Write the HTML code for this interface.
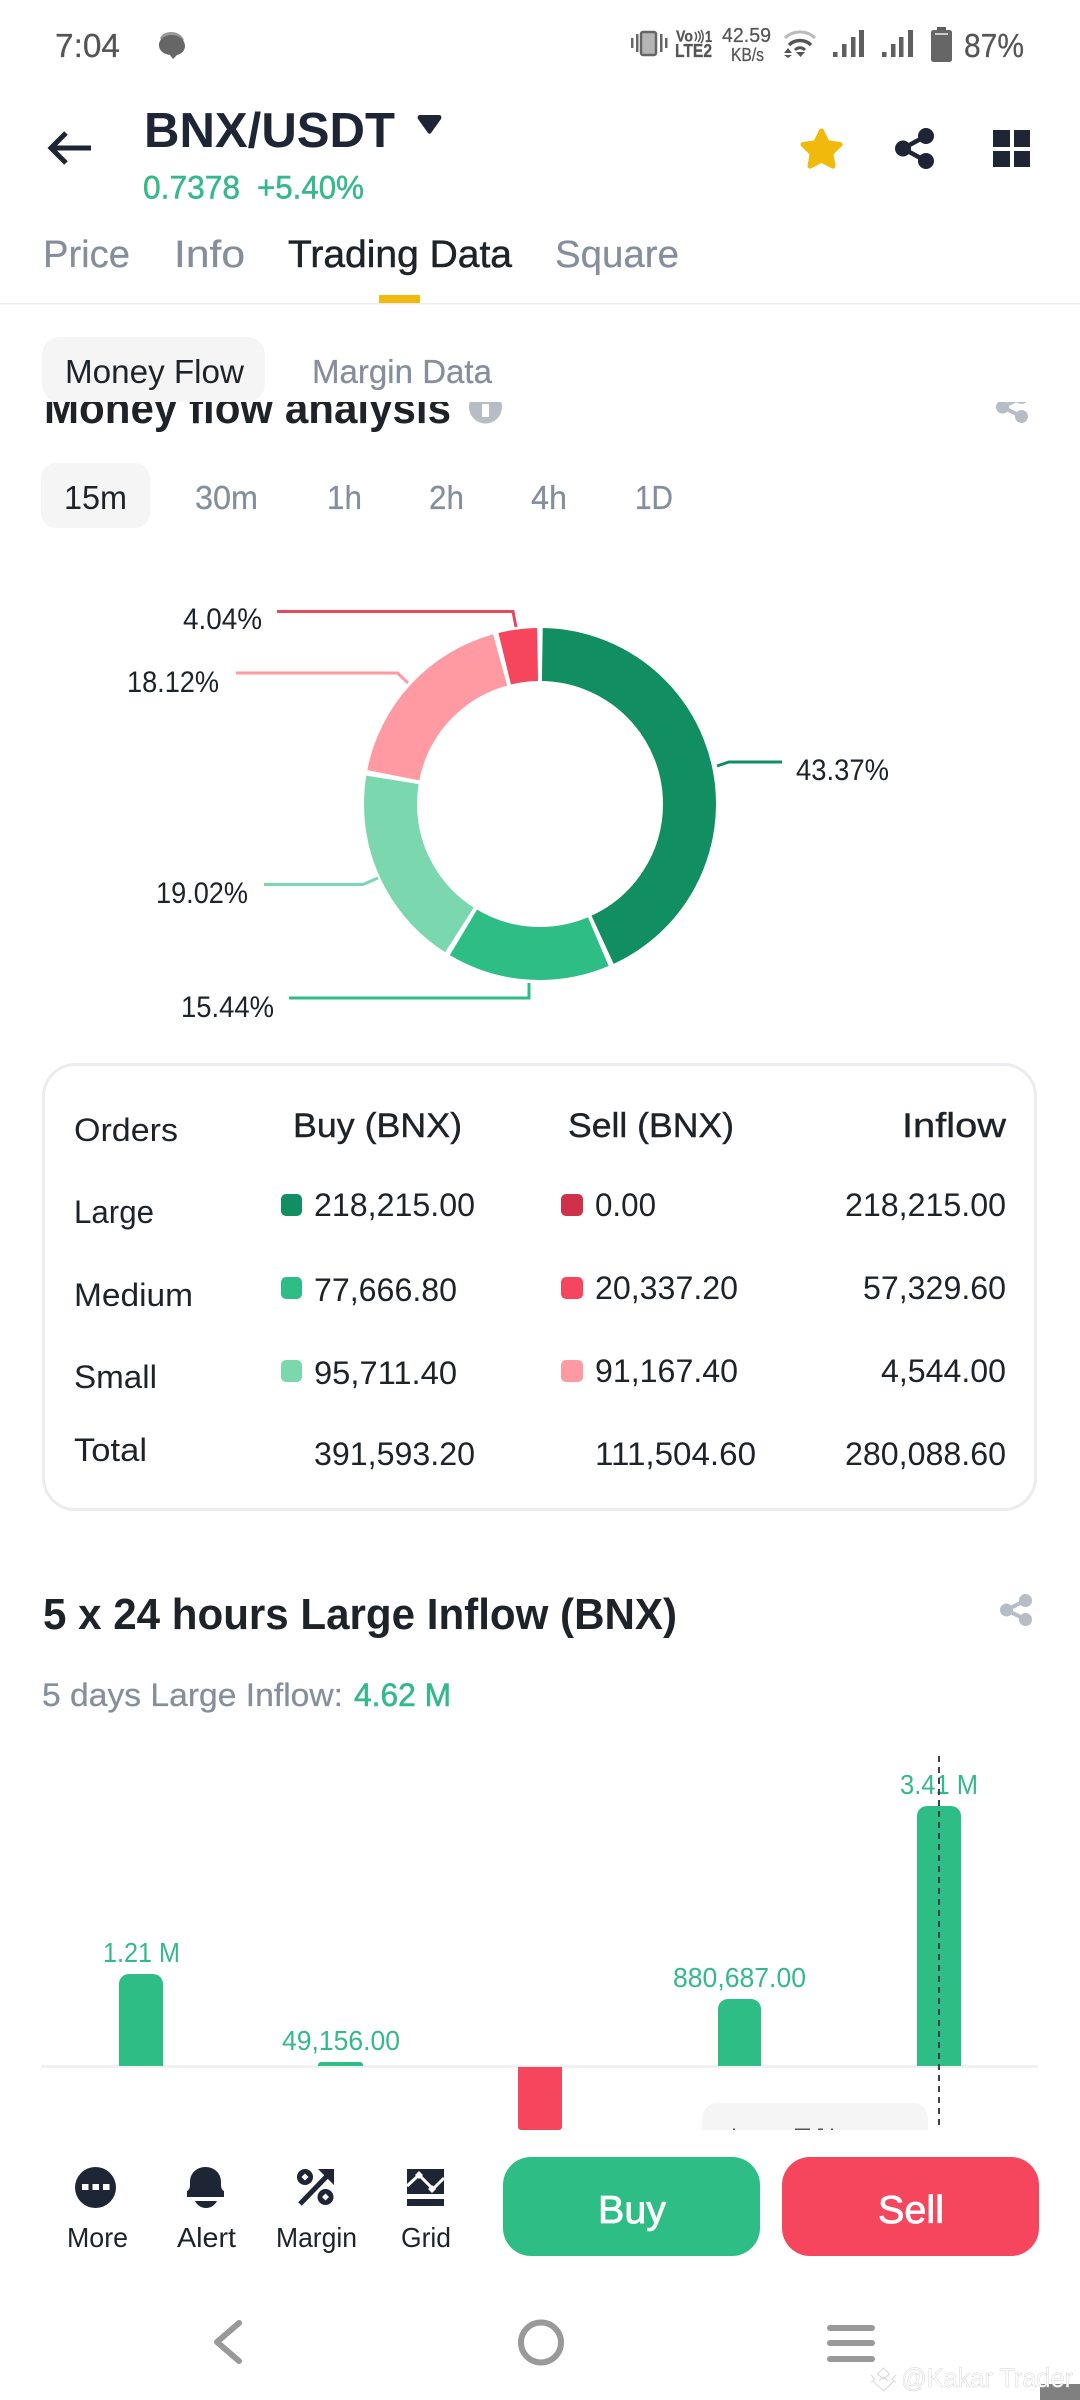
<!DOCTYPE html>
<html lang="en">
<head>
<meta charset="utf-8">
<title>BNX/USDT Trading Data</title>
<style>
html,body{margin:0;padding:0;background:#fff;width:1080px;height:2400px;overflow:hidden}
svg{display:block;position:absolute;left:0;top:0}
text{font-family:"Liberation Sans",sans-serif;fill:#1e2329}
.g{fill:#848e9c;stroke:#848e9c;stroke-width:.25px}
.gr{fill:#35b98a}
.b{font-weight:700}
.s{fill:#555;stroke:#555;stroke-width:.25px}
</style>
</head>
<body>
<svg width="1080" height="2400" viewBox="0 0 1080 2400" xmlns="http://www.w3.org/2000/svg">
<defs>
<clipPath id="c1"><rect x="0" y="402" width="1080" height="60"/></clipPath>
<clipPath id="c2"><rect x="0" y="2000" width="1080" height="130"/></clipPath>
<g id="share"><circle cx="1025.500" cy="1600.500" r="6.500" stroke="none"/><circle cx="1006.500" cy="1610" r="6.500" stroke="none"/><circle cx="1025.500" cy="1619.500" r="6.500" stroke="none"/><path d="M1025.500 1600.500L1006.500 1610L1025.500 1619.500" fill="none" stroke-width="4"/></g>
</defs>
<rect width="1080" height="2400" fill="#fff"/>

<!-- status bar -->
<text class="s" x="55" y="57" font-size="33" textLength="65" lengthAdjust="spacingAndGlyphs">7:04</text>
<path d="M160 38c2-4 6-6 11-6 6 0 11 3 13 8l-6 4-15-1z" fill="#999"/>
<path d="M172 35c7 0 13 5 13 11 0 5-4 8-8 9l-4 4-3-4c-6-1-11-4-11-10 0-6 6-10 13-10z" fill="#666"/>
<g fill="#666">
<rect x="631" y="38" width="2.500" height="10"/><rect x="636" y="34" width="2.500" height="18"/>
<rect x="660" y="34" width="2.500" height="18"/><rect x="665" y="38" width="2.500" height="10"/>
</g>
<rect x="641" y="32" width="15" height="23" rx="2" fill="#b5b5b5" stroke="#666" stroke-width="2.500"/>
<text class="s b" x="676" y="41.500" font-size="16" textLength="17" lengthAdjust="spacingAndGlyphs">Vo</text>
<path d="M695 32c2 3 2 6 0 9M698 31c3 4 3 7 0 11M701 30c3 5 3 9 0 13" stroke="#555" stroke-width="1.500" fill="none"/>
<text class="s b" x="705" y="42" font-size="16" textLength="7" lengthAdjust="spacingAndGlyphs">1</text>
<text class="s b" x="675" y="57" font-size="18" textLength="37" lengthAdjust="spacingAndGlyphs">LTE2</text>
<text class="s" x="722" y="42" font-size="20.500" textLength="49" lengthAdjust="spacingAndGlyphs">42.59</text>
<text class="s" x="731" y="61" font-size="18" textLength="33" lengthAdjust="spacingAndGlyphs">KB/s</text>
<path d="M785 38c8-8 22-8 30 0" stroke="#bbb" stroke-width="3" fill="none"/>
<path d="M789 45c6-6 16-6 22 0" stroke="#555" stroke-width="3.500" fill="none"/>
<path d="M795 50c3-3 7-3 10 0" stroke="#555" stroke-width="3" fill="none"/>
<path d="M784 53l4-5 4 5zM784 55h8l-4 3zM796 52h9l-4.500 5z" fill="#555"/>
<g fill="#5f5f5f">
<rect x="833" y="52" width="4.500" height="5"/><rect x="842" y="44" width="4.500" height="13"/><rect x="851" y="37" width="4.500" height="20"/><rect x="859" y="30" width="5" height="27"/>
<rect x="882" y="52" width="4.500" height="5"/><rect x="891" y="44" width="4.500" height="13"/><rect x="899" y="37" width="4.500" height="20"/><rect x="908" y="30" width="5" height="27"/>
<rect x="937" y="27" width="9" height="4"/>
</g>
<rect x="931" y="30" width="21" height="32" rx="2.500" fill="#666"/>
<rect x="935" y="33" width="13" height="2" fill="#ccc"/>
<text class="s" x="964" y="57" font-size="33" textLength="60" lengthAdjust="spacingAndGlyphs">87%</text>

<!-- header -->
<path d="M91 148H53M66 133L51 148L66 163" fill="none" stroke="#1e2534" stroke-width="5"/>
<text class="b" x="144" y="147" font-size="49" textLength="251" lengthAdjust="spacingAndGlyphs" style="fill:#1e2534">BNX/USDT</text>
<path d="M420 115h19c2 0 3 2 2 4l-10 14c-1 1-2 1-3 0l-10-14c-1-2 0-4 2-4z" fill="#1e2534"/>
<text class="gr" x="143" y="198.500" font-size="32" textLength="97" lengthAdjust="spacingAndGlyphs" stroke="#35b98a" stroke-width=".5">0.7378</text>
<text class="gr" x="257" y="198.500" font-size="32" textLength="107" lengthAdjust="spacingAndGlyphs" stroke="#35b98a" stroke-width=".5">+5.40%</text>
<path d="M821.500 131l5.800 11.700 12.700 1.800-9.200 9 2.200 12.600-11.500-6-11.500 6 2.200-12.600-9.200-9 12.700-1.800z" fill="#f0b90b" stroke="#f0b90b" stroke-width="5" stroke-linejoin="round"/>
<g fill="#1e2534" stroke="#1e2534"><circle cx="926" cy="136" r="7.500"/><circle cx="903" cy="148.500" r="7.500"/><circle cx="926" cy="161" r="7.500"/><path d="M926 136L903 148.500L926 161" fill="none" stroke-width="4.500"/></g>
<g fill="#1e2534"><rect x="993" y="130" width="17" height="17"/><rect x="1014" y="130" width="16" height="17"/><rect x="993" y="151" width="17" height="16"/><rect x="1014" y="151" width="16" height="16"/></g>

<!-- tabs -->
<text class="g" x="43" y="267" font-size="38" textLength="87" lengthAdjust="spacingAndGlyphs">Price</text>
<text class="g" x="174" y="267" font-size="38" textLength="71" lengthAdjust="spacingAndGlyphs">Info</text>
<text x="288" y="267" font-size="38" textLength="224" lengthAdjust="spacingAndGlyphs" stroke="#1e2329" stroke-width=".5">Trading Data</text>
<text class="g" x="555" y="267" font-size="38" textLength="124" lengthAdjust="spacingAndGlyphs">Square</text>
<rect x="379" y="295" width="41" height="8" fill="#f0b90b"/>
<rect x="0" y="303" width="1080" height="1.500" fill="#eaecef"/>

<!-- money flow title (clipped) -->
<g clip-path="url(#c1)">
<text class="b" x="44" y="423" font-size="44" textLength="407" lengthAdjust="spacingAndGlyphs">Money flow analysis</text>
<circle cx="485.500" cy="407" r="16.500" fill="#b7bdc6"/>
<rect x="482" y="404" width="7" height="13" fill="#fff"/>
<use href="#share" x="-4" y="-1203" fill="#b7bdc6" stroke="#b7bdc6"/>
</g>
<rect x="42" y="337" width="223" height="65" rx="18" fill="#f5f5f5"/>
<text x="65" y="383" font-size="33" textLength="179" lengthAdjust="spacingAndGlyphs">Money Flow</text>
<text class="g" x="312" y="383" font-size="33" textLength="180" lengthAdjust="spacingAndGlyphs">Margin Data</text>

<!-- timeframes -->
<rect x="41" y="463" width="109" height="65" rx="15" fill="#f5f5f5"/>
<text x="64" y="509" font-size="33" textLength="63" lengthAdjust="spacingAndGlyphs">15m</text>
<text class="g" x="195" y="509" font-size="33" textLength="63" lengthAdjust="spacingAndGlyphs">30m</text>
<text class="g" x="327" y="509" font-size="33" textLength="35" lengthAdjust="spacingAndGlyphs">1h</text>
<text class="g" x="429" y="509" font-size="33" textLength="35" lengthAdjust="spacingAndGlyphs">2h</text>
<text class="g" x="531" y="509" font-size="33" textLength="36" lengthAdjust="spacingAndGlyphs">4h</text>
<text class="g" x="635" y="509" font-size="33" textLength="38" lengthAdjust="spacingAndGlyphs">1D</text>

<!-- donut -->
<g fill="none" stroke-width="53" transform="rotate(-90 540 804)">
<circle cx="540" cy="804" r="149.500" pathLength="100" stroke="#118f62" stroke-dasharray="42.87 57.13" stroke-dashoffset="-0.250"/>
<circle cx="540" cy="804" r="149.500" pathLength="100" stroke="#2ebd85" stroke-dasharray="14.94 85.06" stroke-dashoffset="-43.62"/>
<circle cx="540" cy="804" r="149.500" pathLength="100" stroke="#7bd7ae" stroke-dasharray="18.52 81.48" stroke-dashoffset="-59.06"/>
<circle cx="540" cy="804" r="149.500" pathLength="100" stroke="#ff9aa2" stroke-dasharray="17.62 82.38" stroke-dashoffset="-78.08"/>
<circle cx="540" cy="804" r="149.500" pathLength="100" stroke="#f6465d" stroke-dasharray="3.54 96.46" stroke-dashoffset="-96.20"/>
</g>
<g fill="none" stroke-width="3">
<path d="M717 766L729 762H782" stroke="#118f62"/>
<path d="M529 983V998H289" stroke="#2ebd85"/>
<path d="M378 878L363 884.500H264" stroke="#7bd7ae"/>
<path d="M236 673H397.500L408 683" stroke="#ff9aa2"/>
<path d="M277 611.500H513L516 627" stroke="#e8485e"/>
</g>
<g font-size="30">
<text x="796" y="780" textLength="93" lengthAdjust="spacingAndGlyphs">43.37%</text>
<text x="181" y="1017" textLength="93" lengthAdjust="spacingAndGlyphs">15.44%</text>
<text x="156" y="903" textLength="92" lengthAdjust="spacingAndGlyphs">19.02%</text>
<text x="127" y="692" textLength="92" lengthAdjust="spacingAndGlyphs">18.12%</text>
<text x="183" y="629" textLength="79" lengthAdjust="spacingAndGlyphs">4.04%</text>
</g>

<!-- table card -->
<rect x="43.500" y="1064.500" width="992" height="445" rx="32" fill="#fff" stroke="#eaecef" stroke-width="3"/>
<g font-size="32">
<text x="74" y="1141" textLength="104" lengthAdjust="spacingAndGlyphs">Orders</text>
<text x="293" y="1137" font-size="34" textLength="169" lengthAdjust="spacingAndGlyphs" stroke="#1e2329" stroke-width=".4">Buy (BNX)</text>
<text x="568" y="1137" font-size="34" textLength="166" lengthAdjust="spacingAndGlyphs" stroke="#1e2329" stroke-width=".4">Sell (BNX)</text>
<text x="902" y="1137" font-size="34" textLength="104" lengthAdjust="spacingAndGlyphs" stroke="#1e2329" stroke-width=".4">Inflow</text>

<text x="74" y="1223" textLength="80" lengthAdjust="spacingAndGlyphs">Large</text>
<text x="74" y="1306" textLength="119" lengthAdjust="spacingAndGlyphs">Medium</text>
<text x="74" y="1388" textLength="83" lengthAdjust="spacingAndGlyphs">Small</text>
<text x="74" y="1461" textLength="73" lengthAdjust="spacingAndGlyphs">Total</text>

<text x="314" y="1216" textLength="161" lengthAdjust="spacingAndGlyphs">218,215.00</text>
<text x="595" y="1216" textLength="61" lengthAdjust="spacingAndGlyphs">0.00</text>
<text x="845" y="1216" textLength="161" lengthAdjust="spacingAndGlyphs">218,215.00</text>

<text x="314" y="1301" textLength="143" lengthAdjust="spacingAndGlyphs">77,666.80</text>
<text x="595" y="1299" textLength="143" lengthAdjust="spacingAndGlyphs">20,337.20</text>
<text x="863" y="1299" textLength="143" lengthAdjust="spacingAndGlyphs">57,329.60</text>

<text x="314" y="1384" textLength="143" lengthAdjust="spacingAndGlyphs">95,711.40</text>
<text x="595" y="1382" textLength="143" lengthAdjust="spacingAndGlyphs">91,167.40</text>
<text x="881" y="1382" textLength="125" lengthAdjust="spacingAndGlyphs">4,544.00</text>

<text x="314" y="1465" textLength="161" lengthAdjust="spacingAndGlyphs">391,593.20</text>
<text x="595" y="1465" textLength="161" lengthAdjust="spacingAndGlyphs">111,504.60</text>
<text x="845" y="1465" textLength="161" lengthAdjust="spacingAndGlyphs">280,088.60</text>
</g>
<rect x="281" y="1194" width="21" height="22" rx="5" fill="#118f62"/>
<rect x="281" y="1277" width="21" height="22" rx="5" fill="#2ebd85"/>
<rect x="281" y="1360" width="21" height="22" rx="5" fill="#7bd7ae"/>
<rect x="561" y="1194" width="22" height="22" rx="5" fill="#cf304a"/>
<rect x="561" y="1277" width="22" height="22" rx="5" fill="#f6465d"/>
<rect x="561" y="1360" width="22" height="22" rx="5" fill="#ff9aa2"/>

<!-- inflow section -->
<text class="b" x="43" y="1629" font-size="44" textLength="634" lengthAdjust="spacingAndGlyphs">5 x 24 hours Large Inflow (BNX)</text>
<use href="#share" fill="#b7bdc6" stroke="#b7bdc6"/>
<text class="g" x="42" y="1706" font-size="32" textLength="301" lengthAdjust="spacingAndGlyphs">5 days Large Inflow:</text>
<text class="gr" x="354" y="1706" font-size="32" textLength="97" lengthAdjust="spacingAndGlyphs" stroke="#35b98a" stroke-width=".6">4.62 M</text>

<!-- bars -->
<rect x="41" y="2065" width="997" height="3" fill="#eff1f3"/>
<path d="M119 2066V1984a10 10 0 0 1 10-10h24a10 10 0 0 1 10 10V2066z" fill="#2ebd85"/>
<path d="M318 2066v-1a3 3 0 0 1 3-3h39a3 3 0 0 1 3 3v1z" fill="#2ebd85"/>
<path d="M718 2066V2009a10 10 0 0 1 10-10h23a10 10 0 0 1 10 10V2066z" fill="#2ebd85"/>
<path d="M917 2066V1816a10 10 0 0 1 10-10h24a10 10 0 0 1 10 10V2066z" fill="#2ebd85"/>
<path d="M518 2067h44V2127a3 3 0 0 1-3 3H521a3 3 0 0 1-3-3z" fill="#f6465d"/>
<g font-size="28">
<text class="gr" x="103" y="1962" textLength="77" lengthAdjust="spacingAndGlyphs">1.21 M</text>
<text class="gr" x="282" y="2050" textLength="118" lengthAdjust="spacingAndGlyphs">49,156.00</text>
<text class="gr" x="673" y="1987" textLength="133" lengthAdjust="spacingAndGlyphs">880,687.00</text>
<text class="gr" x="900" y="1794" textLength="78" lengthAdjust="spacingAndGlyphs">3.41 M</text>
</g>
<path d="M702 2130V2118a15 15 0 0 1 15-15H913a15 15 0 0 1 15 15V2130z" fill="#f5f5f5"/>
<g fill="#555"><rect x="733" y="2128.500" width="2" height="1.500"/><rect x="795" y="2128.500" width="15" height="1.500"/><rect x="818" y="2128.500" width="5" height="1.500"/><rect x="831" y="2128.500" width="2" height="1.500"/></g>
<line x1="939" y1="1756" x2="939" y2="2125" stroke="#3c424c" stroke-width="2" stroke-dasharray="6 5"/>

<!-- bottom action icons -->
<circle cx="95.500" cy="2187.500" r="20.500" fill="#1e2534"/>
<g fill="#fff"><rect x="82" y="2184" width="6.500" height="6"/><rect x="92.500" y="2184" width="6.500" height="6"/><rect x="103" y="2184" width="6.500" height="6"/></g>
<path d="M187 2197V2191c2-1 3-3 3-6v-3c0-9 7-15 15.500-15s15.500 6 15.500 15v3c0 3 1 5 3 6v6z" fill="#1e2534"/>
<path d="M195 2201h22c-2 4-6 7-11 7s-9-3-11-7z" fill="#1e2534"/>
<g>
<circle cx="305" cy="2177" r="8" fill="#1e2534"/><path d="M305 2173.500l3.500 3.500-3.500 3.500-3.500-3.500z" fill="#fff"/>
<circle cx="325.500" cy="2197" r="8" fill="#1e2534"/><path d="M325.500 2193.500l3.500 3.500-3.500 3.500-3.500-3.500z" fill="#fff"/>
<path d="M300 2204L328 2175" stroke="#1e2534" stroke-width="5" fill="none"/>
<path d="M318 2169H334V2185z" fill="#1e2534"/>
</g>
<g>
<rect x="407" y="2169" width="37" height="25" fill="#1e2534"/>
<path d="M407 2186L419 2175L433 2189L444 2178" fill="none" stroke="#fff" stroke-width="3"/>
<path d="M419 2171l4 4-4 4-4-4zM432 2185l4 4-4 4-4-4z" fill="#fff"/>
<rect x="407" y="2199" width="37" height="7" fill="#1e2534"/>
</g>
<g font-size="28">
<text x="67" y="2247" textLength="61" lengthAdjust="spacingAndGlyphs">More</text>
<text x="177" y="2247" textLength="59" lengthAdjust="spacingAndGlyphs">Alert</text>
<text x="276" y="2247" textLength="81" lengthAdjust="spacingAndGlyphs">Margin</text>
<text x="401" y="2247" textLength="50" lengthAdjust="spacingAndGlyphs">Grid</text>
</g>

<!-- buy / sell -->
<rect x="503" y="2157" width="257" height="99" rx="28" fill="#2ebd85"/>
<rect x="782" y="2157" width="257" height="99" rx="28" fill="#f6465d"/>
<text x="598" y="2223" font-size="39" textLength="68" lengthAdjust="spacingAndGlyphs" style="fill:#fff" stroke="#fff" stroke-width=".8">Buy</text>
<text x="878" y="2223" font-size="39" textLength="66" lengthAdjust="spacingAndGlyphs" style="fill:#fff" stroke="#fff" stroke-width=".8">Sell</text>

<!-- nav bar -->
<path d="M239 2323L217 2342L239 2361" fill="none" stroke="#999" stroke-width="6" stroke-linecap="round" stroke-linejoin="round"/>
<circle cx="541" cy="2342.500" r="20" fill="none" stroke="#999" stroke-width="6"/>
<g fill="#999"><rect x="827" y="2325" width="48" height="6" rx="3"/><rect x="827" y="2340" width="48" height="6" rx="3"/><rect x="827" y="2356" width="48" height="6" rx="3"/></g>

<!-- corner + watermark -->
<rect x="1040" y="2384" width="40" height="16" fill="#808080"/>
<path d="M883.500 2368l6 6-6 5-6-5zM871 2375l4 4-4 3M896 2375l-4 4 4 3M873 2381l10.500 10 10.500-10M879 2381l4.500-4 4.500 4" fill="none" stroke="#d8d8d8" stroke-width="1"/>
<text x="901" y="2387" font-size="27" textLength="172" lengthAdjust="spacingAndGlyphs" style="fill:#fff" stroke="#d4d4d4" stroke-width=".5">@Kakar Trader</text>
</svg>
</body>
</html>
